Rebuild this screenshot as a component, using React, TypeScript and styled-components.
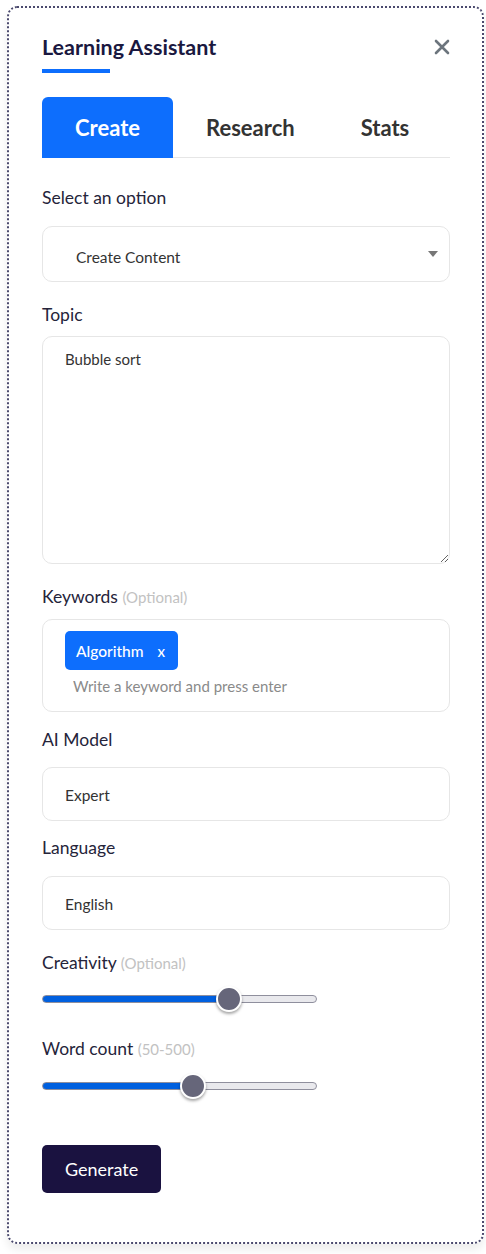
import React, { useState } from "react";
import styled, { createGlobalStyle } from "styled-components";

const GlobalStyle = createGlobalStyle`
  html, body { margin: 0; padding: 0; background: #ffffff; }
  body { font-family: Lato, "Liberation Sans", sans-serif; color: #25243a; }
  * { box-sizing: border-box; }
`;

const Page = styled.div`
  padding: 6px 2px 10px 7px;
  width: 486px;
`;

const Card = styled.div`
  width: 477px;
  min-height: 1238px;
  border: 2px dotted #4b4a6e;
  border-radius: 10px;
  padding: 27px 32px 48px 33px;
  background: #fff;
  box-shadow: 0 6px 8px rgba(0, 0, 0, 0.07);
  display: flex;
  flex-direction: column;
`;

const Header = styled.div`
  display: flex;
  justify-content: space-between;
  align-items: flex-start;
`;

const TitleBlock = styled.div`
  display: flex;
  flex-direction: column;
`;

const Title = styled.h1`
  margin: 0;
  font-size: 21.5px;
  line-height: 24px;
  font-weight: 700;
  color: #1a1840;
`;

const TitleBar = styled.div`
  margin-top: 10px;
  width: 68px;
  height: 4px;
  background: #0d6efd;
`;

const CloseButton = styled.button`
  border: none;
  background: none;
  padding: 0;
  margin: 4px 0 0 0;
  width: 16px;
  height: 16px;
  cursor: pointer;
  display: flex;
  svg { display: block; }
`;

const TabList = styled.div`
  margin-top: 24px;
  display: flex;
  border-bottom: 1px solid #e6e6e6;
  height: 61px;
`;

const Tab = styled.button<{ $active?: boolean }>`
  height: 61px;
  padding: 0 33px;
  border: none;
  border-radius: 6px 6px 0 0;
  background: ${(p) => (p.$active ? "#0d6efd" : "transparent")};
  color: ${(p) => (p.$active ? "#ffffff" : "#333333")};
  font-family: inherit;
  font-size: 22px;
  font-weight: 700;
  cursor: pointer;
`;

const Field = styled.div<{ $top: number }>`
  margin-top: ${(p) => p.$top}px;
  display: flex;
  flex-direction: column;
`;

const Label = styled.label<{ $gap: number }>`
  font-size: 17.5px;
  line-height: 24px;
  color: #25243a;
  margin-bottom: ${(p) => p.$gap}px;
`;

const Hint = styled.span`
  font-size: 15px;
  color: #c2c2c2;
`;

const SelectBox = styled.div`
  position: relative;
  height: 56px;
  border: 1px solid #e6e6e6;
  border-radius: 10px;
  padding: 21px 0 0 33px;
  font-size: 15.5px;
  color: #333;
`;

const Caret = styled.span`
  position: absolute;
  right: 11px;
  top: 24px;
  width: 0;
  height: 0;
  border-left: 5px solid transparent;
  border-right: 5px solid transparent;
  border-top: 6px solid #777;
`;

const TextArea = styled.textarea`
  height: 228px;
  border: 1px solid #e6e6e6;
  border-radius: 10px;
  padding: 12px 22px;
  font-family: inherit;
  font-size: 15px;
  line-height: 20px;
  color: #333;
  outline: none;
  resize: vertical;
`;

const KeywordBox = styled.div`
  height: 93px;
  border: 1px solid #e6e6e6;
  border-radius: 10px;
  padding: 11px 22px 0;
  display: flex;
  flex-direction: column;
  align-items: flex-start;
`;

const Chip = styled.span`
  display: inline-flex;
  align-items: center;
  height: 39px;
  padding: 0 13px 0 11px;
  border-radius: 5px;
  background: #0d6efd;
  color: #fff;
  font-size: 15.5px;
  font-weight: 500;
`;

const ChipRemove = styled.span`
  margin-left: 14px;
  font-size: 15px;
`;

const KeywordInput = styled.input`
  margin-top: 6px;
  border: none;
  outline: none;
  padding: 0 0 0 8px;
  width: 100%;
  font-family: inherit;
  font-size: 15px;
  line-height: 20px;
  color: #333;
  &::placeholder { color: #8a8a8a; }
`;

const TextInput = styled.input`
  height: 54px;
  border: 1px solid #e6e6e6;
  border-radius: 10px;
  padding: 2px 22px 0;
  font-family: inherit;
  font-size: 15.5px;
  color: #333;
  outline: none;
`;

const Range = styled.input`
  -webkit-appearance: none;
  appearance: none;
  width: 275px;
  height: 26px;
  margin: 0;
  background: transparent;
  &::-webkit-slider-runnable-track {
    height: 8px;
    border-radius: 4px;
    border: 1px solid #8f8f9d;
    background: linear-gradient(to right, #0060df var(--fill), #e9e9ed var(--fill));
  }
  &::-webkit-slider-thumb {
    -webkit-appearance: none;
    width: 26px;
    height: 26px;
    margin-top: -10px;
    border-radius: 50%;
    background: #66667a;
    border: 2px solid #fff;
    box-shadow: 0 2px 3px rgba(0, 0, 0, 0.35);
  }
`;

const GenerateButton = styled.button`
  margin-top: 46px;
  align-self: flex-start;
  height: 48px;
  padding: 0 23px;
  border: none;
  border-radius: 5px;
  background: #1a1240;
  color: #fff;
  font-family: inherit;
  font-size: 18px;
  cursor: pointer;
`;

function Slider({ min, max, value, onChange }: { min: number; max: number; value: number; onChange: (v: number) => void }) {
  const frac = (value - min) / (max - min);
  const fill = `calc(12px + ${(frac * 249).toFixed(1)}px)`;
  return (
    <Range
      type="range"
      min={min}
      max={max}
      value={value}
      onChange={(e) => onChange(Number(e.target.value))}
      style={{ ["--fill" as any]: fill }}
    />
  );
}

export default function App() {
  const [tab, setTab] = useState("Create");
  const [creativity, setCreativity] = useState(70);
  const [words, setWords] = useState(300);
  return (
    <Page>
      <GlobalStyle />
      <Card>
        <Header>
          <TitleBlock>
            <Title>Learning Assistant</Title>
            <TitleBar />
          </TitleBlock>
          <CloseButton aria-label="Close">
            <svg width="16" height="16" viewBox="0 0 16 16">
              <path d="M2 2 L14 14 M14 2 L2 14" stroke="#6c757d" strokeWidth="2.6" strokeLinecap="round" />
            </svg>
          </CloseButton>
        </Header>
        <TabList>
          {["Create", "Research", "Stats"].map((t) => (
            <Tab key={t} $active={tab === t} onClick={() => setTab(t)}>
              {t}
            </Tab>
          ))}
        </TabList>

        <Field $top={28}>
          <Label $gap={16}>Select an option</Label>
          <SelectBox>
            Create Content
            <Caret />
          </SelectBox>
        </Field>

        <Field $top={21}>
          <Label $gap={9}>Topic</Label>
          <TextArea defaultValue="Bubble sort" />
        </Field>

        <Field $top={21}>
          <Label $gap={10}>
            Keywords <Hint>(Optional)</Hint>
          </Label>
          <KeywordBox>
            <Chip>
              Algorithm<ChipRemove>x</ChipRemove>
            </Chip>
            <KeywordInput placeholder="Write a keyword and press enter" />
          </KeywordBox>
        </Field>

        <Field $top={16}>
          <Label $gap={15}>AI Model</Label>
          <TextInput defaultValue="Expert" />
        </Field>

        <Field $top={15}>
          <Label $gap={16}>Language</Label>
          <TextInput defaultValue="English" />
        </Field>

        <Field $top={21}>
          <Label $gap={11}>
            Creativity <Hint>(Optional)</Hint>
          </Label>
          <Slider min={0} max={100} value={creativity} onChange={setCreativity} />
        </Field>

        <Field $top={25}>
          <Label $gap={12}>
            Word count <Hint>(50-500)</Hint>
          </Label>
          <Slider min={50} max={500} value={words} onChange={setWords} />
        </Field>

        <GenerateButton>Generate</GenerateButton>
      </Card>
    </Page>
  );
}
